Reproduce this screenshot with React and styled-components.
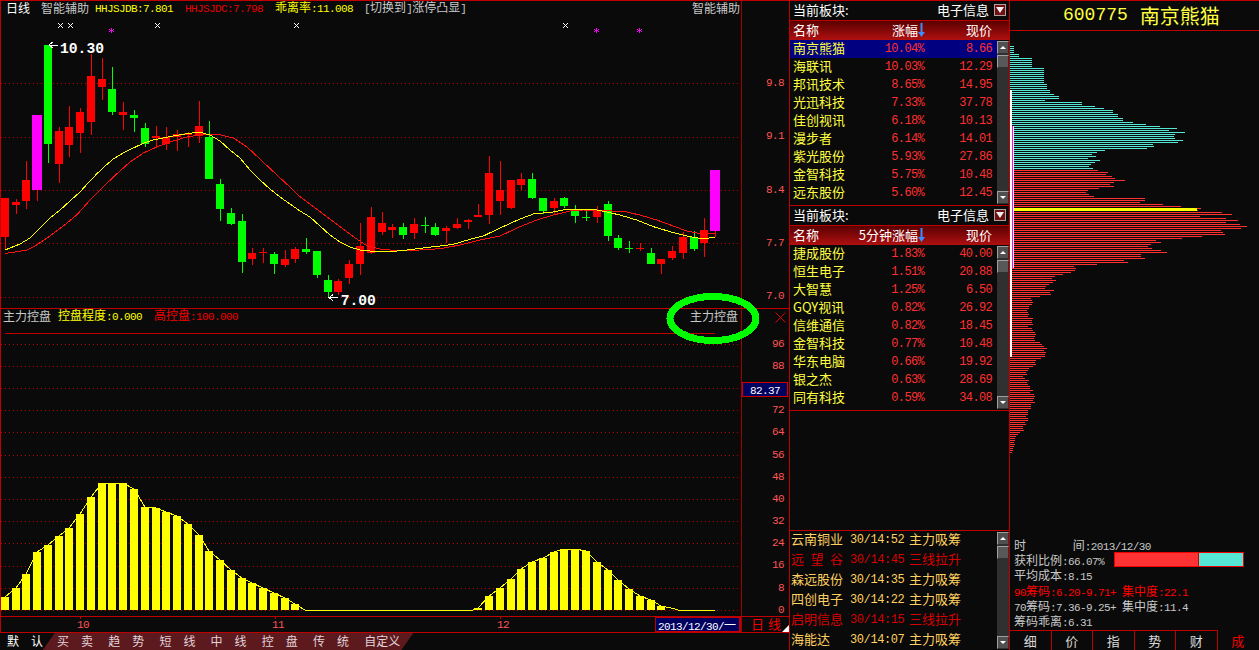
import React from 'react'
import styled, { createGlobalStyle } from 'styled-components'

const LINE = '#c00000'
const DIM_LINE = '#a00000'
const AXIS = '#ff5555'
const CJK = '"Noto Sans CJK SC", sans-serif'
const MONO = '"Liberation Mono", monospace'

const GlobalStyle = createGlobalStyle`
  html, body {
    margin: 0;
    padding: 0;
    background: #0a0a0a;
    overflow: hidden;
  }
  body {
    font-family: ${CJK};
    font-size: 12px;
    line-height: 15px;
    color: #c8c8c8;
  }
`

const Screen = styled.div`
  display: flex;
  width: 1259px;
  height: 650px;
  overflow: hidden;
  background: #0a0a0a;
`

const MainColumn = styled.div`
  position: relative;
  display: flex;
  flex-direction: column;
  width: 789px;
  flex: none;
`

const Num = styled.span`
  font-family: ${MONO};
  font-size: 11px;
  letter-spacing: -0.6px;
  white-space: pre;
`

const Pane = styled.div`
  display: flex;
  height: ${p => p.$height}px;
  box-sizing: border-box;
  border-left: 1px solid ${LINE};
  border-bottom: 1px solid ${LINE};
  border-top: ${p => (p.$top ? `1px solid ${LINE}` : 'none')};
`

const ChartSide = styled.div`
  display: flex;
  flex-direction: column;
  width: 740px;
  flex: none;
`

const ChartHeader = styled.div`
  display: flex;
  align-items: center;
  height: ${p => p.$height}px;
  box-sizing: border-box;
  padding-left: ${p => p.$pad}px;
  padding-bottom: 2px;
  line-height: 12px;
  white-space: nowrap;
`

const HeadItem = styled.span`
  margin-left: ${p => p.$ml || 0}px;
  color: ${p => p.$color || '#c8c8c8'};
  ${p => p.$right && `margin-left: auto; padding-right: ${p.$right}px;`}
`

const ChartSvg = styled.svg`
  display: block;
  flex: none;
`

const AxisColumn = styled.div`
  position: relative;
  display: flex;
  flex-direction: column;
  width: 48px;
  box-sizing: border-box;
  border-left: 1px solid ${DIM_LINE};
  padding-top: ${p => p.$pad || 0}px;
`

const Tick = styled.div`
  display: flex;
  align-items: center;
  justify-content: flex-end;
  flex: none;
  height: ${p => p.$height}px;
  padding-right: 5px;
  color: ${AXIS};
  font-family: ${MONO};
  font-size: 11px;
  letter-spacing: -0.6px;
`

const CloseCell = styled.div`
  display: flex;
  align-items: center;
  justify-content: center;
  flex: none;
  height: 17px;
  margin-bottom: 7px;
  padding-left: 29px;
  box-sizing: border-box;
`

const ValueTag = styled.div`
  position: absolute;
  top: 73px;
  left: 0;
  width: 46px;
  height: 15px;
  box-sizing: border-box;
  border: 1px solid #d00000;
  background: #000060;
  color: #fff;
  text-align: center;
  line-height: 12px;
`

const Highlight = styled.svg`
  position: absolute;
  left: 666px;
  top: 293px;
  z-index: 5;
`

const XAxisRow = styled.div`
  display: flex;
  height: 16px;
  box-sizing: border-box;
  border-left: 1px solid ${LINE};
  border-bottom: 1px solid ${LINE};
`

const Months = styled.div`
  display: flex;
  width: 740px;
  flex: none;
  padding-left: 76px;
  box-sizing: border-box;
`

const MonthLabel = styled.div`
  position: relative;
  width: ${p => p.$width}px;
  flex: none;
  color: ${AXIS};
  font-family: ${MONO};
  font-size: 11px;
  letter-spacing: -0.6px;
  padding-top: 1px;
  &::before {
    content: '';
    position: absolute;
    left: 3px;
    top: 0;
    width: 1px;
    height: 2px;
    background: ${LINE};
  }
`

const DateBox = styled.div`
  margin-left: auto;
  width: 86px;
  height: 15px;
  flex: none;
  box-sizing: border-box;
  border: 1px solid ${LINE};
  border-right-width: 2px;
  background: #000060;
  color: #fff;
  line-height: 13px;
  padding-left: 2px;
  white-space: nowrap;
`

const PeriodCell = styled.div`
  position: relative;
  width: 48px;
  box-sizing: border-box;
  border-left: 1px solid ${DIM_LINE};
  padding-left: 9px;
  color: #f00000;
  font-size: 13px;
  line-height: 14px;
  letter-spacing: 4px;
  white-space: nowrap;
  &::after {
    content: '';
    position: absolute;
    right: 0;
    bottom: 0;
    border-style: solid;
    border-width: 0 0 7px 7px;
    border-color: transparent transparent #fff transparent;
  }
`

const TabBar = styled.div`
  display: flex;
  height: 17px;
  background: #8a1010;
`

const Tab = styled.div`
  flex: none;
  width: ${p => (p.$active ? 55 : 63.2)}px;
  height: 17px;
  margin-left: ${p => (p.$active ? 0 : -12)}px;
  padding-left: ${p => (p.$active ? 7 : 14)}px;
  box-sizing: border-box;
  clip-path: ${p =>
    p.$active
      ? 'polygon(0 0, 100% 0, calc(100% - 12px) 100%, 0 100%)'
      : 'polygon(12px 0, 100% 0, calc(100% - 12px) 100%, 0 100%)'};
  background: ${p => (p.$active ? '#0a0a0a' : '#5c1a1e')};
  color: ${p => (p.$active ? '#fff' : '#e2d4dc')};
  letter-spacing: ${p => (p.$tight ? 0 : 12)}px;
  line-height: 15px;
  white-space: nowrap;
`

const TabFiller = styled.div`
  flex: 1;
  margin-left: -12px;
  clip-path: polygon(12px 0, 100% 0, 100% 100%, 0 100%);
  background: #0a0a0a;
`

const ListColumn = styled.div`
  display: flex;
  flex-direction: column;
  width: 221px;
  height: 650px;
  flex: none;
  box-sizing: border-box;
  border-left: 1px solid ${LINE};
  border-right: 1px solid ${LINE};
  border-top: 1px solid ${LINE};
  overflow: hidden;
`

const BoardPanel = styled.section`
  flex: none;
  border-bottom: 1px solid ${LINE};
`

const BoardHeader = styled.div`
  display: flex;
  align-items: center;
  height: 20px;
  box-sizing: border-box;
  border-bottom: 1px solid ${LINE};
  padding: 0 3px 2px;
  color: #fff;
  font-size: 13px;
`

const BoardName = styled.span`
  margin-left: auto;
`

const DropButton = styled.span`
  position: relative;
  display: block;
  flex: none;
  width: 12px;
  height: 12px;
  margin-left: 5px;
  box-sizing: border-box;
  border: 1px solid #b0a0a0;
  background: #701010;
  &::after {
    content: '';
    position: absolute;
    left: 1px;
    top: 2px;
    border-style: solid;
    border-width: 6px 4px 0 4px;
    border-color: #f0f0f0 transparent transparent transparent;
  }
`

const TableHead = styled.div`
  display: grid;
  grid-template-columns: 74px 58px 67px;
  align-items: center;
  height: 19px;
  box-sizing: border-box;
  padding: 0 0 2px 3px;
  background: linear-gradient(#5a0000, #b01010);
  color: #fff;
  font-size: 13px;
`

const HeadRight = styled.span`
  display: flex;
  align-items: center;
  justify-content: flex-end;
  white-space: nowrap;
`

const SortIcon = styled.svg`
  flex: none;
  display: block;
`

const BoardBody = styled.div`
  display: flex;
  height: 165px;
`

const Rows = styled.div`
  flex: 1;
  min-width: 0;
`

const BoardRow = styled.div`
  display: grid;
  grid-template-columns: 71px 60px 68px;
  align-items: center;
  height: 18px;
  padding-left: 3px;
  background: ${p => (p.$selected ? '#000080' : 'transparent')};
`

const StockName = styled.span`
  color: #ffff40;
  font-size: 13px;
  line-height: 15px;
  padding-bottom: 3px;
  white-space: nowrap;
`

const ListNum = styled.span`
  color: #ff3030;
  font-family: ${MONO};
  font-size: 12px;
  letter-spacing: -0.67px;
  text-align: right;
`

const Scrollbar = styled.div`
  display: flex;
  flex-direction: column;
  width: 12px;
  flex: none;
  margin: 1px 0 1px 0;
  background: #303030;
`

const ScrollButton = styled.div`
  display: flex;
  align-items: center;
  justify-content: center;
  flex: none;
  height: 13px;
  box-sizing: border-box;
  border: 1px solid;
  border-color: #a0a0a0 #303030 #303030 #a0a0a0;
  background: #505050;
  margin-top: ${p => (p.$down ? 'auto' : 0)};
  &::after {
    content: '';
    border-style: solid;
    border-width: ${p => (p.$down ? '3px 3px 0 3px' : '0 3px 3px 3px')};
    border-color: ${p =>
      p.$down ? '#fff transparent transparent' : 'transparent transparent #fff'};
  }
`

const ScrollThumb = styled.div`
  flex: none;
  height: 13px;
  margin-top: 1px;
  box-sizing: border-box;
  border: 1px solid;
  border-color: #a0a0a0 #303030 #303030 #a0a0a0;
  background: #585858;
`

const EmptyGap = styled.div`
  flex: none;
  height: 119px;
  border-bottom: 1px solid ${LINE};
`

const SignalBody = styled.div`
  display: flex;
  flex: 1;
  min-height: 0;
`

const SignalRow = styled.div`
  display: grid;
  grid-template-columns: 59px 59px 1fr;
  align-items: center;
  height: 20px;
  box-sizing: border-box;
  padding: 0 0 4px 1px;
  color: ${p => (p.$alert ? '#d80000' : '#ffd060')};
  font-size: 13px;
  white-space: nowrap;
`

const SignalName = styled.span`
  padding-bottom: 2px;
  letter-spacing: ${p => (p.$spread ? 6.5 : 0)}px;
`

const SignalTime = styled.span`
  padding-top: 1px;
  font-family: ${MONO};
  font-size: 12px;
  letter-spacing: -0.4px;
`

const ChipColumn = styled.div`
  display: flex;
  flex-direction: column;
  width: 249px;
  height: 650px;
  flex: none;
  border-top: 1px solid ${LINE};
  box-sizing: border-box;
`

const ChipTitle = styled.div`
  display: flex;
  align-items: center;
  flex: none;
  height: 30px;
  box-sizing: border-box;
  border-bottom: 1px solid ${LINE};
  padding-left: 53px;
  color: #ffff40;
  font-size: 20px;
  white-space: nowrap;
`

const TitleCode = styled.span`
  margin-right: 12px;
  font-family: ${MONO};
  font-size: 18px;
`

const ChipStats = styled.div`
  flex: 1;
  padding: 7px 0 0 4px;
`

const StatRow = styled.div`
  display: flex;
  align-items: baseline;
  height: 15.2px;
  color: ${p => (p.$alert ? '#ff0000' : '#c8c8c8')};
  white-space: pre;
`

const WideLabel = styled.span`
  word-spacing: 44px;
`

const ProfitBar = styled.div`
  align-self: center;
  width: 130px;
  height: 15px;
  margin-left: 10px;
  box-sizing: border-box;
  border: 1px solid #f00000;
  background: #55e6d6;
`

const ProfitFill = styled.div`
  height: 100%;
  width: ${p => p.$pct}%;
  background: #ff3333;
  border-right: 1px solid #d00000;
  box-sizing: border-box;
`

const ChipTabs = styled.div`
  display: flex;
  flex: none;
  height: 20px;
`

const ChipTab = styled.div`
  flex: 1;
  box-sizing: border-box;
  border-top: 1px solid ${p => (p.$active ? 'transparent' : LINE)};
  border-right: 1px solid ${p => (p.$active ? 'transparent' : LINE)};
  color: ${p => (p.$active ? '#f00000' : '#d8d8d8')};
  font-size: 13px;
  line-height: 20px;
  text-align: center;
`

// all chart data is in 3x units (three units = one screen pixel), x/y from the page origin
const COLORS = { r: '#ff0000', g: '#00ff00', m: '#ff00ff' }

// [x, bodyTop, bodyBottom, wickTop, wickBottom, colour]
const CANDLES = [
  [15, 594, 711, 594, 750, 'r'], [48, 606, 615, 597, 642, 'r'], [78, 540, 603, 483, 627, 'r'],
  [111, 345, 570, 345, 603, 'm'], [144, 135, 432, 135, 489, 'g'], [177, 393, 492, 381, 549, 'r'],
  [207, 381, 435, 318, 471, 'r'], [240, 336, 399, 324, 459, 'r'], [273, 228, 366, 162, 405, 'r'],
  [306, 237, 261, 174, 300, 'r'], [336, 267, 336, 201, 345, 'g'], [369, 336, 345, 306, 390, 'r'],
  [402, 345, 354, 330, 396, 'g'], [435, 384, 432, 369, 441, 'g'], [468, 408, 414, 378, 444, 'r'],
  [498, 411, 432, 381, 450, 'r'], [531, 402, 411, 390, 453, 'r'], [564, 399, 405, 396, 441, 'r'],
  [597, 378, 408, 303, 429, 'r'], [627, 411, 537, 363, 537, 'g'], [660, 552, 627, 537, 663, 'g'],
  [693, 639, 672, 624, 675, 'g'], [726, 663, 786, 642, 819, 'g'], [756, 759, 777, 744, 795, 'r'],
  [789, 756, 759, 744, 789, 'r'], [822, 762, 792, 756, 822, 'g'], [855, 777, 795, 750, 801, 'r'],
  [885, 747, 777, 741, 789, 'r'], [918, 747, 756, 714, 762, 'g'], [951, 753, 825, 753, 834, 'g'],
  [984, 840, 876, 825, 890, 'g'], [1014, 843, 876, 837, 885, 'r'], [1047, 792, 834, 780, 852, 'r'],
  [1080, 738, 792, 669, 825, 'r'], [1113, 651, 759, 621, 762, 'r'], [1146, 669, 696, 636, 705, 'r'],
  [1176, 681, 690, 672, 714, 'r'], [1209, 681, 705, 669, 717, 'g'], [1242, 672, 699, 654, 717, 'r'],
  [1275, 675, 678, 651, 699, 'g'], [1305, 681, 705, 669, 708, 'g'], [1338, 684, 693, 678, 729, 'r'],
  [1371, 672, 684, 654, 687, 'r'], [1404, 660, 666, 657, 687, 'r'], [1435, 645, 650, 612, 651, 'r'],
  [1467, 519, 645, 468, 672, 'r'], [1500, 570, 603, 483, 645, 'r'], [1533, 540, 624, 540, 627, 'r'],
  [1563, 537, 555, 519, 570, 'r'], [1596, 537, 594, 519, 597, 'g'], [1629, 594, 633, 594, 642, 'g'],
  [1662, 603, 624, 594, 642, 'r'], [1692, 594, 618, 591, 624, 'g'], [1725, 630, 648, 615, 669, 'g'],
  [1758, 651, 654, 633, 663, 'g'], [1791, 630, 651, 618, 669, 'r'], [1824, 612, 708, 603, 723, 'g'],
  [1854, 714, 744, 705, 750, 'g'], [1887, 744, 747, 723, 759, 'g'], [1920, 744, 747, 729, 753, 'r'],
  [1953, 759, 792, 744, 792, 'g'], [1983, 777, 792, 777, 822, 'r'], [2016, 753, 774, 738, 780, 'r'],
  [2049, 711, 759, 696, 777, 'r'], [2082, 711, 747, 693, 753, 'g'], [2112, 690, 729, 654, 771, 'r'],
  [2145, 510, 693, 510, 711, 'm'],
]

const YELLOW_MA = '15,750 60,732 90,714 120,684 150,654 180,630 210,603 240,576 265,548 290,522 315,498 340,477 370,459 400,444 430,430 460,420 490,414 520,408 560,401 597,396 630,405 660,423 690,450 720,474 750,510 780,540 810,567 840,591 870,612 900,633 930,651 960,678 990,705 1020,726 1050,741 1080,750 1110,753 1190,753 1220,750 1260,745 1320,738 1360,733 1410,718 1450,708 1500,684 1560,657 1600,642 1660,636 1700,628 1780,628 1820,636 1860,645 1910,660 1960,680 2010,695 2060,708 2110,717 2145,711'
const RED_MA = '15,760 40,757 80,750 110,735 150,708 190,678 230,645 270,600 310,560 350,522 390,486 430,459 470,441 510,426 560,411 600,405 660,404 700,414 740,440 780,477 820,515 860,552 900,590 940,620 980,650 1020,680 1060,710 1100,737 1140,747 1190,752 1260,750 1320,746 1380,735 1440,720 1500,708 1560,680 1610,660 1660,645 1710,633 1750,630 1820,632 1880,636 1920,645 1970,660 2020,678 2060,693 2110,703 2145,700'

const CROSS_MARKS = [174, 204, 465, 882, 1689]
const STAR_MARKS = [327, 1782, 1911]
const CROSS_PIXELS = [[0, 0], [4, 0], [1, 1], [3, 1], [2, 2], [1, 3], [3, 3], [0, 4], [4, 4]]
const STAR_PIXELS = [[2, 0], [0, 1], [2, 1], [4, 1], [1, 2], [2, 2], [3, 2], [0, 3], [2, 3], [4, 3], [2, 4]]
const PRICE_GRID = [250, 411, 571, 730, 891]

// [x, top] of the control bars
const CONTROL_BARS = [
  [15, 381], [48, 354], [78, 312], [111, 246], [144, 225], [177, 198], [207, 174], [240, 132],
  [273, 81], [306, 39], [336, 42], [369, 39], [402, 57], [435, 111], [468, 114], [498, 126],
  [531, 138], [564, 162], [597, 195], [627, 243], [660, 270], [693, 300], [726, 324], [756, 339],
  [789, 354], [822, 369], [855, 384], [885, 402],
].map(([x, top]) => [x, top + 1410]).concat(
  [
    [1434, 324], [1467, 288], [1500, 264], [1533, 237], [1563, 207], [1596, 186], [1629, 174],
    [1662, 156], [1692, 147], [1725, 147], [1758, 153], [1791, 186], [1824, 210], [1854, 240],
    [1887, 267], [1920, 288], [1953, 300], [1983, 318],
  ].map(([x, top]) => [x, top + 1500])
)

const CONTROL_LINE = [
  ...CONTROL_BARS.slice(0, 28).map(([x, top]) => `${x},${top}`),
  '918,1832',
  '1413,1832',
  ...CONTROL_BARS.slice(28).map(([x, top]) => `${x},${top}`),
  '2022,1826',
  '2040,1832',
  '2145,1832',
].join(' ')

const SUB_GRID = Array.from({ length: 13 }, (_, i) => Math.round(1032 + i * 66.6))

const TEAL_START = 138
const TEAL_ENDS = [
  27, 27, 27, 27, 42, 42, 81, 81, 81, 81, 81, 117, 117, 117, 117, 117, 117, 117, 117, 126, 126, 126,
  135, 135, 147, 162, 162, 120, 231, 231, 270, 297, 324, 324, 339, 339, 354, 354, 384, 423, 465, 516,
  492, 540, 510, 507, 510, 534, 519, 444, 447, 426, 300, 276, 261, 273, 249, 285, 270, 258, 252, 264,
]
const RED_START = 510
const RED_ENDS = [
  279, 309, 303, 321, 330, 360, 327, 315, 327, 282, 249, 243, 252, 267, 420, 420, 405, 474, 528, 588,
  579, 651, 681, 585, 663, 699, 663, 705, 726, 708, 648, 654, 660, 591, 531, 453, 468, 438, 429, 441,
  468, 486, 408, 408, 420, 357, 369, 276, 207, 213, 210, 198, 174, 150, 141, 153, 144, 132, 123, 120,
  147, 135, 138, 105, 78, 81, 84, 81, 72, 72, 66, 69, 72, 69, 84, 81, 81, 84, 69, 81, 84, 90, 93, 90,
  87, 90, 105, 111, 117, 126, 117, 123, 120, 120, 108, 93, 90, 93, 84, 72, 69, 63, 66, 54, 60, 72, 66,
  69, 75, 75, 84, 75, 87, 90, 87, 84, 90, 78, 78, 78, 69, 69, 69, 63, 69, 69, 60, 63, 54, 54, 57, 45,
  39, 33, 30, 30, 27, 30, 27, 24, 24, 21,
]

const BOARD_ONE = [
  ['南京熊猫', '10.04%', '8.66'],
  ['海联讯', '10.03%', '12.29'],
  ['邦讯技术', '8.65%', '14.95'],
  ['光迅科技', '7.33%', '37.78'],
  ['佳创视讯', '6.18%', '10.13'],
  ['漫步者', '6.14%', '14.01'],
  ['紫光股份', '5.93%', '27.86'],
  ['金智科技', '5.75%', '10.48'],
  ['远东股份', '5.60%', '12.45'],
]

const BOARD_TWO = [
  ['捷成股份', '1.83%', '40.00'],
  ['恒生电子', '1.51%', '20.88'],
  ['大智慧', '1.25%', '6.50'],
  ['GQY视讯', '0.82%', '26.92'],
  ['信维通信', '0.82%', '18.45'],
  ['金智科技', '0.77%', '10.48'],
  ['华东电脑', '0.66%', '19.92'],
  ['银之杰', '0.63%', '28.69'],
  ['同有科技', '0.59%', '34.08'],
]

const SIGNALS = [
  ['云南铜业', '30/14:52', '主力吸筹', false],
  ['远望谷', '30/14:45', '三线拉升', true, true],
  ['森远股份', '30/14:35', '主力吸筹', false],
  ['四创电子', '30/14:22', '主力吸筹', false],
  ['启明信息', '30/14:15', '三线拉升', true],
  ['海能达', '30/14:07', '主力吸筹', false],
]

const TABS = ['默认', '买卖', '趋势', '短线', '中线', '控盘', '传统']
const CHIP_TABS = ['细', '价', '指', '势', '财']

const PixelMark = ({ x, y, pixels, color }) => (
  <g fill={color} shapeRendering="crispEdges">
    {pixels.map(([px, py]) => (
      <rect key={`${px}-${py}`} x={x + px * 3} y={y + py * 3} width="3" height="3" />
    ))}
  </g>
)

const PriceChart = () => (
  <ChartSvg width="740" height="292" viewBox="3 48 2220 876">
    {PRICE_GRID.map(y => (
      <line key={y} x1="3" x2="2223" y1={y} y2={y} stroke={LINE} strokeWidth="3" strokeDasharray="3 9" shapeRendering="crispEdges" />
    ))}
    {CANDLES.map(([x, top, bottom, wickTop, wickBottom, c]) => (
      <g key={x} fill={COLORS[c]} shapeRendering="crispEdges">
        <rect x={x} y={wickTop} width="3" height={wickBottom - wickTop} fill={c === 'm' ? COLORS.r : COLORS[c]} />
        <rect
          x={c === 'm' ? x - 15 : x - 12}
          y={top}
          width={c === 'm' ? 30 : 24}
          height={bottom - top}
        />
      </g>
    ))}
    <polyline points={RED_MA} fill="none" stroke="#ff1010" strokeWidth="3" shapeRendering="crispEdges" />
    <polyline points={YELLOW_MA} fill="none" stroke="#ffff00" strokeWidth="3" shapeRendering="crispEdges" />
    {CROSS_MARKS.map(x => (
      <PixelMark key={x} x={x} y={69} pixels={CROSS_PIXELS} color="#fff" />
    ))}
    {STAR_MARKS.map(x => (
      <PixelMark key={x} x={x} y={84} pixels={STAR_PIXELS} color="#ff00ff" />
    ))}
    <path d="M175 135H147M159 126l-12 9 12 9" fill="none" stroke="#fff" strokeWidth="3" shapeRendering="crispEdges" />
    <text x="180" y="160" fill="#fff" fontFamily={MONO} fontWeight="700" fontSize="44">10.30</text>
    <path d="M1015 893H987M999 884l-12 9 12 9" fill="none" stroke="#fff" strokeWidth="3" shapeRendering="crispEdges" />
    <text x="1022" y="916" fill="#fff" fontFamily={MONO} fontWeight="700" fontSize="44">7.00</text>
  </ChartSvg>
)

const ControlChart = () => (
  <ChartSvg width="740" height="291" viewBox="3 975 2220 873">
    <rect x="15" y="999" width="2130" height="3" fill={LINE} shapeRendering="crispEdges" />
    {SUB_GRID.map(y => (
      <line key={y} x1="3" x2="2223" y1={y} y2={y} stroke={LINE} strokeWidth="3" strokeDasharray="3 9" shapeRendering="crispEdges" />
    ))}
    {CONTROL_BARS.map(([x, top]) => (
      <rect key={x} x={x - 12} y={top} width="24" height={1830 - top} fill="#ffff00" shapeRendering="crispEdges" />
    ))}
    <polyline points={CONTROL_LINE} fill="none" stroke="#ffff00" strokeWidth="3" shapeRendering="crispEdges" />
  </ChartSvg>
)

const ChipChart = () => (
  <ChartSvg width="249" height="499" viewBox="15 93 747 1497">
    {TEAL_ENDS.map((end, i) => (
      <rect key={i} x="15" y={TEAL_START + i * 6} width={end - 15} height="3" fill="#55e6d6" shapeRendering="crispEdges" />
    ))}
    {RED_ENDS.map((end, i) => (
      <rect key={i} x="15" y={RED_START + i * 6} width={end - 15} height="3" fill="#ff3030" shapeRendering="crispEdges" />
    ))}
    <rect x="27" y="624" width="549" height="9" fill="#ffff00" shapeRendering="crispEdges" />
    <rect x="15" y="270" width="6" height="801" fill="#fff" shapeRendering="crispEdges" />
    <rect x="21" y="378" width="3" height="427" fill="#ff00ff" shapeRendering="crispEdges" />
    <rect x="24" y="378" width="3" height="427" fill="#fff" shapeRendering="crispEdges" />
  </ChartSvg>
)

const ScrollTrack = () => (
  <Scrollbar>
    <ScrollButton />
    <ScrollThumb />
    <ScrollButton $down />
  </Scrollbar>
)

const SortArrow = () => (
  <SortIcon width="7" height="14" viewBox="0 0 7 14">
    <path d="M2.5 0h2v9H7l-3.5 5L0 9h2.5z" fill="#3a8cff" />
  </SortIcon>
)

const Board = ({ metric, rows, selected }) => (
  <BoardPanel>
    <BoardHeader>
      当前板块:
      <BoardName>电子信息</BoardName>
      <DropButton />
    </BoardHeader>
    <TableHead>
      <span>名称</span>
      <HeadRight>{metric}<SortArrow /></HeadRight>
      <HeadRight>现价</HeadRight>
    </TableHead>
    <BoardBody>
      <Rows>
        {rows.map(([name, pct, price], i) => (
          <BoardRow key={name} $selected={selected && i === 0}>
            <StockName>{name}</StockName>
            <ListNum>{pct}</ListNum>
            <ListNum>{price}</ListNum>
          </BoardRow>
        ))}
      </Rows>
      <ScrollTrack />
    </BoardBody>
  </BoardPanel>
)

const App = () => (
  <Screen>
    <GlobalStyle />
    <MainColumn>
      <Pane $height={309} $top>
        <ChartSide>
          <ChartHeader $height={15} $pad={5}>
            <HeadItem $color="#fff">日线</HeadItem>
            <HeadItem $ml={11}>智能辅助</HeadItem>
            <HeadItem $ml={6} $color="#ffff00"><Num>HHJSJDB:7.801</Num></HeadItem>
            <HeadItem $ml={12} $color="#e80000"><Num>HHJSJDC:7.798</Num></HeadItem>
            <HeadItem $ml={12} $color="#ffff00">乖离率<Num>:11.008</Num></HeadItem>
            <HeadItem $ml={11}><Num>[</Num>切换到<Num>]</Num>涨停凸显<Num>]</Num></HeadItem>
            <HeadItem $right={1}>智能辅助</HeadItem>
          </ChartHeader>
          <PriceChart />
        </ChartSide>
        <AxisColumn $pad={56}>
          {['9.8', '9.1', '8.4', '7.7', '7.0'].map(v => (
            <Tick key={v} $height={53.25}>{v}</Tick>
          ))}
        </AxisColumn>
      </Pane>
      <Pane $height={308}>
        <ChartSide>
          <ChartHeader $height={16} $pad={2}>
            <HeadItem>主力控盘</HeadItem>
            <HeadItem $ml={7} $color="#ffff00">控盘程度<Num>:0.000</Num></HeadItem>
            <HeadItem $ml={12} $color="#f00000">高控盘<Num>:100.000</Num></HeadItem>
            <HeadItem $right={3}>主力控盘</HeadItem>
          </ChartHeader>
          <ControlChart />
        </ChartSide>
        <AxisColumn>
          <CloseCell>
            <svg width="11" height="11" viewBox="0 0 11 11">
              <path d="M0.5 0.5l10 10M10.5 0.5l-10 10" stroke="#e00000" fill="none" />
            </svg>
          </CloseCell>
          {['96', '88', '', '72', '64', '56', '48', '40', '32', '24', '16', '8', '0'].map((v, i) => (
            <Tick key={i} $height={22.2}>{v}</Tick>
          ))}
          <ValueTag><Num>82.37</Num></ValueTag>
        </AxisColumn>
      </Pane>
      <XAxisRow>
        <Months>
          <MonthLabel $width={195}>10</MonthLabel>
          <MonthLabel $width={225}>11</MonthLabel>
          <MonthLabel $width={30}>12</MonthLabel>
          <DateBox><Num>2013/12/30/</Num>一</DateBox>
        </Months>
        <PeriodCell>日线</PeriodCell>
      </XAxisRow>
      <TabBar>
        {TABS.map((t, i) => (
          <Tab key={t} $active={i === 0}>{t}</Tab>
        ))}
        <Tab $tight>自定义</Tab>
        <TabFiller />
      </TabBar>
      <Highlight width="94" height="51" viewBox="0 0 94 51">
        <ellipse cx="47" cy="25.5" rx="43" ry="22" fill="none" stroke="#00ff00" strokeWidth="7" shapeRendering="crispEdges" />
      </Highlight>
    </MainColumn>

    <ListColumn>
      <Board metric="涨幅" rows={BOARD_ONE} selected />
      <Board metric="5分钟涨幅" rows={BOARD_TWO} />
      <EmptyGap />
      <SignalBody>
        <Rows>
          {SIGNALS.map(([name, time, kind, alert, spread]) => (
            <SignalRow key={name} $alert={alert}>
              <SignalName $spread={spread}>{name}</SignalName>
              <SignalTime>{time}</SignalTime>
              <SignalName>{kind}</SignalName>
            </SignalRow>
          ))}
        </Rows>
        <ScrollTrack />
      </SignalBody>
    </ListColumn>

    <ChipColumn>
      <ChipTitle>
        <TitleCode>600775</TitleCode>
        南京熊猫
      </ChipTitle>
      <ChipChart />
      <ChipStats>
        <StatRow><WideLabel>时 间</WideLabel><Num>:2013/12/30</Num></StatRow>
        <StatRow>
          获利比例<Num>:66.07%</Num>
          <ProfitBar><ProfitFill $pct={65.7} /></ProfitBar>
        </StatRow>
        <StatRow>平均成本<Num>:8.15</Num></StatRow>
        <StatRow $alert><Num>90</Num>筹码<Num>:6.20-9.71+ </Num>集中度<Num>:22.1</Num></StatRow>
        <StatRow><Num>70</Num>筹码<Num>:7.36-9.25+ </Num>集中度<Num>:11.4</Num></StatRow>
        <StatRow>筹码乖离<Num>:6.31</Num></StatRow>
      </ChipStats>
      <ChipTabs>
        {CHIP_TABS.map(t => (
          <ChipTab key={t}>{t}</ChipTab>
        ))}
        <ChipTab $active>成</ChipTab>
      </ChipTabs>
    </ChipColumn>
  </Screen>
)

export default App
